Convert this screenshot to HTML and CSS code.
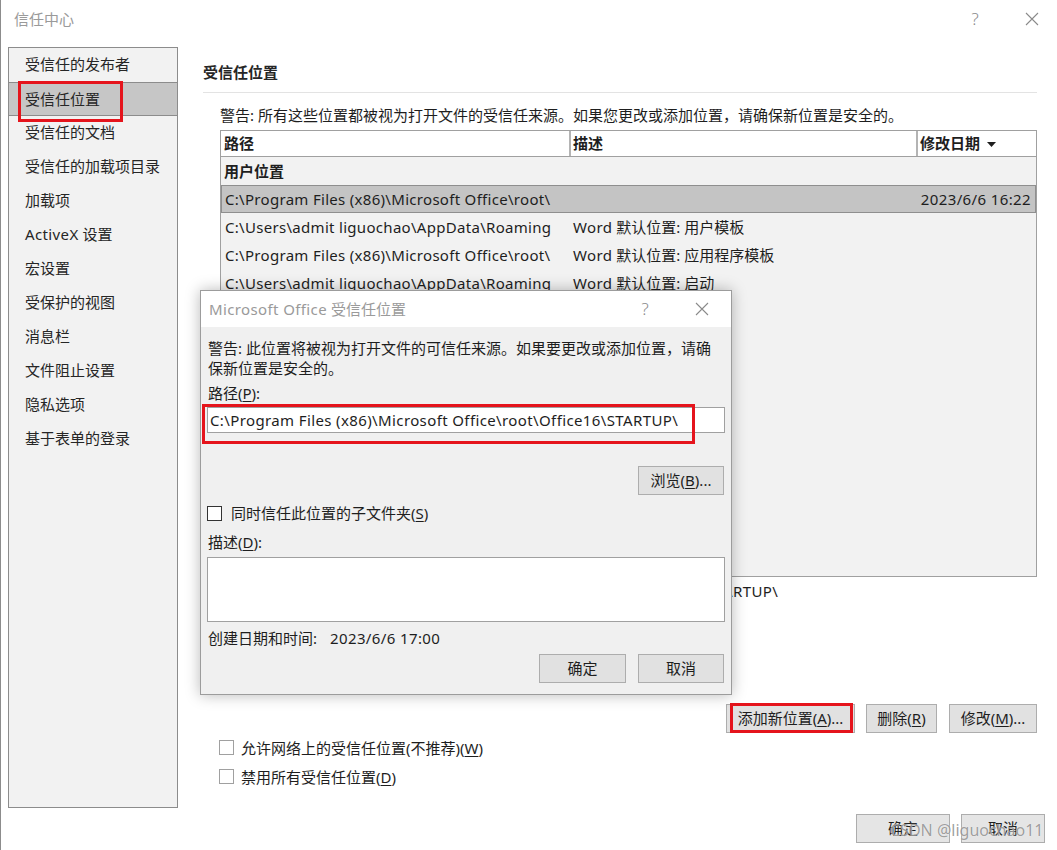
FILE: index.html
```html
<!DOCTYPE html>
<html lang="zh-CN">
<head>
<meta charset="utf-8">
<title>信任中心</title>
<link rel="stylesheet" href="styles.css">
</head>
<body>
<div class="window">
  <header class="titlebar">
    <span class="title">信任中心</span>
    <div class="caption-btns">
      <span class="help">?</span>
      <svg class="close" width="14" height="14" viewBox="0 0 14 14"><path d="M1 1L13 13M13 1L1 13" stroke="#8a8a8a" stroke-width="1.1" fill="none"/></svg>
    </div>
  </header>
  <div class="content">
    <nav class="sidebar">
      <div class="nav-item">受信任的发布者</div>
      <div class="nav-item selected">受信任位置</div>
      <div class="nav-item">受信任的文档</div>
      <div class="nav-item">受信任的加载项目录</div>
      <div class="nav-item">加载项</div>
      <div class="nav-item"><span class="lt">ActiveX</span> 设置</div>
      <div class="nav-item">宏设置</div>
      <div class="nav-item">受保护的视图</div>
      <div class="nav-item">消息栏</div>
      <div class="nav-item">文件阻止设置</div>
      <div class="nav-item">隐私选项</div>
      <div class="nav-item">基于表单的登录</div>
    </nav>
    <main class="main">
      <h2 class="heading">受信任位置</h2>
      <div class="rule"></div>
      <div class="section">
        <p class="warn">警告: 所有这些位置都被视为打开文件的受信任来源。如果您更改或添加位置，请确保新位置是安全的。</p>
        <div class="table">
          <div class="thead">
            <div class="th c1">路径</div>
            <div class="th c2">描述</div>
            <div class="th c3">修改日期<svg class="sort" width="9" height="5" viewBox="0 0 9 5"><path d="M0 0H9L4.5 5Z" fill="#1e1e1e"/></svg></div>
          </div>
          <div class="group">用户位置</div>
          <div class="row sel"><div class="c1 lt">C:\Program Files (x86)\Microsoft Office\root\</div><div class="c2"></div><div class="c3 lt">2023/6/6 16:22</div></div>
          <div class="row"><div class="c1 lt">C:\Users\admit liguochao\AppData\Roaming</div><div class="c2"><span class="lt">Word</span> 默认位置: 用户模板</div><div class="c3"></div></div>
          <div class="row"><div class="c1 lt">C:\Program Files (x86)\Microsoft Office\root\</div><div class="c2"><span class="lt">Word</span> 默认位置: 应用程序模板</div><div class="c3"></div></div>
          <div class="row"><div class="c1 lt">C:\Users\admit liguochao\AppData\Roaming</div><div class="c2"><span class="lt">Word</span> 默认位置: 启动</div><div class="c3"></div></div>
        </div>
        <div class="details">
          <div class="drow"><span class="dl">路径:</span><span class="dv lt">C:\Program Files (x86)\Microsoft Office\root\Office16\STARTUP\</span></div>
          <div class="drow"><span class="dl">描述:</span><span class="dv"></span></div>
          <div class="drow"><span class="dl">修改日期:</span><span class="dv lt">2023/6/6 16:22</span></div>
          <div class="drow"><span class="dl">子文件夹:</span><span class="dv">不允许</span></div>
        </div>
        <div class="actions">
          <button class="btn btn-add marked">添加新位置(<u>A</u>)...</button>
          <button class="btn btn-del">删除(<u>R</u>)</button>
          <button class="btn btn-mod">修改(<u>M</u>)...</button>
        </div>
        <div class="chk"><span class="box"></span><span>允许网络上的受信任位置(不推荐)(<u>W</u>)</span></div>
        <div class="chk"><span class="box"></span><span>禁用所有受信任位置(<u>D</u>)</span></div>
      </div>
    </main>
  </div>
  <footer class="footer">
    <button class="btn btn-ok">确定</button>
    <button class="btn btn-cancel">取消</button>
  </footer>

  <div class="dialog">
    <div class="dlg-title">
      <span class="dlg-name"><span class="lt">Microsoft Office</span> 受信任位置</span>
      <div class="dlg-caption">
        <span class="help">?</span>
        <svg class="close" width="14" height="14" viewBox="0 0 14 14"><path d="M1 1L13 13M13 1L1 13" stroke="#8a8a8a" stroke-width="1.1" fill="none"/></svg>
      </div>
    </div>
    <div class="dlg-body">
      <p class="dlg-warn">警告: 此位置将被视为打开文件的可信任来源。如果要更改或添加位置，请确<br>保新位置是安全的。</p>
      <div class="dlg-label">路径(<u>P</u>):</div>
      <div class="dlg-input marked-input"><span class="lt">C:\Program Files (x86)\Microsoft Office\root\Office16\STARTUP\</span></div>
      <div class="dlg-browse"><button class="btn btn-browse">浏览(<u>B</u>)...</button></div>
      <div class="dlg-chk"><span class="box dark"></span><span>同时信任此位置的子文件夹(<u>S</u>)</span></div>
      <div class="dlg-label dlg-desc-label">描述(<u>D</u>):</div>
      <div class="dlg-textarea"></div>
      <div class="dlg-created"><span>创建日期和时间:</span><span class="dlg-date lt">2023/6/6 17:00</span></div>
      <div class="dlg-buttons">
        <button class="btn btn-dok">确定</button>
        <button class="btn btn-dcancel">取消</button>
      </div>
    </div>
  </div>

  <div class="watermark">CSDN @liguochao11</div>
</div>
</body>
</html>
```
FILE: styles.css
```css
* { box-sizing: border-box; }
html, body {
  margin: 0;
  padding: 0;
  background: #fff;
}
body {
  font-family: "Noto Sans", "Noto Sans CJK SC", sans-serif;
  font-size: 15px;
  color: #1e1e1e;
  line-height: 20px;
}
u { text-decoration: underline; text-underline-offset: 2px; }
.lt { letter-spacing: 0.38px; }

.window {
  position: relative;
  width: 1057px;
  height: 850px;
  border-left: 1px solid #8c8c8c;
  display: flex;
  flex-direction: column;
  overflow: hidden;
}

/* title bar */
.titlebar {
  height: 47px;
  flex: none;
  display: flex;
  align-items: flex-start;
  padding: 9px 18px 0 13px;
}
.title { color: #9a9a9a; }
.caption-btns {
  margin-left: auto;
  display: flex;
  align-items: center;
  gap: 40px;
}
.help {
  width: 20px;
  text-align: center;
  color: #8a8a8a;
  font-size: 17px;
  font-family: "Noto Sans", sans-serif;
  font-weight: 300;
}
.close { display: block; }

/* content */
.content {
  height: 761px;
  flex: none;
  display: flex;
  padding-left: 7px;
}
.sidebar {
  width: 170px;
  flex: none;
  background: #f2f2f2;
  border: 1px solid #8c8c8c;
}
.nav-item {
  position: relative;
  height: 34px;
  line-height: 32px;
  padding-left: 16px;
  color: #262626;
  white-space: nowrap;
}
.nav-item.selected {
  background: #c6c6c6;
  border-top: 1px solid #8c8c8c;
  border-bottom: 1px solid #8c8c8c;
  line-height: 32px;
}
.nav-item.selected::after {
  content: "";
  position: absolute;
  left: 9px;
  top: -2px;
  width: 99px;
  height: 35px;
  border: 3px solid #e5141c;
}

.main {
  flex: 1;
  display: flex;
  flex-direction: column;
  padding: 0 20px 0 25px;
}
.heading {
  margin: 15px 0 0;
  font-size: 15px;
  font-weight: bold;
  line-height: 20px;
  color: #262626;
}
.rule {
  margin-top: 10px;
  height: 1px;
  background: #e3e3e3;
}
.section {
  flex: 1;
  display: flex;
  flex-direction: column;
  padding: 0 0 17px 17px;
}
.warn {
  margin: 12px 0 5px;
  white-space: nowrap;
}

/* table */
.table {
  height: 447px;
  flex: none;
  border: 1px solid #a0a0a0;
  background: #f2f2f2;
  overflow: hidden;
}
.thead {
  display: grid;
  grid-template-columns: 348px 347px 1fr;
  height: 26px;
  background: #fff;
  border-bottom: 1px solid #a0a0a0;
}
.th {
  font-weight: bold;
  line-height: 25px;
  padding-left: 3px;
  white-space: nowrap;
}
.th.c2, .th.c3 {
  border-left: 2px solid #b4b4b4;
  padding-left: 2px;
}
.sort { margin-left: 7px; vertical-align: 2px; }
.group {
  height: 28px;
  line-height: 28px;
  padding-left: 3px;
  font-weight: bold;
}
.row {
  display: grid;
  grid-template-columns: 348px 347px 1fr;
  height: 28px;
  line-height: 28px;
  white-space: nowrap;
}
.row > div { overflow: hidden; }
.row .c1 { padding-left: 4px; letter-spacing: 0.3px; }
.row .c2 { padding-left: 4px; }
.row .c3 { text-align: right; padding-right: 5px; }
.row.sel {
  background: #c4c4c4;
  border: 1px solid #8f8f8f;
  line-height: 26px;
}
.row.sel .c1 { padding-left: 3px; }
.row.sel .c2 { padding-left: 3px; }
.row.sel .c3 { padding-right: 4px; }

/* details under table */
.details { margin-top: 4px; }
.drow {
  height: 28px;
  line-height: 20px;
  white-space: nowrap;
  display: flex;
}
.dl { width: 90px; flex: none; }

.actions {
  margin-top: auto;
  display: flex;
  justify-content: flex-end;
  gap: 11px;
}
.btn {
  font-family: inherit;
  font-size: 15px;
  color: #1e1e1e;
  background: #e1e1e1;
  border: 1px solid #adadad;
  border-radius: 0;
  height: 29px;
  padding: 0;
  line-height: 27px;
  text-align: center;
  white-space: nowrap;
}
.btn-add { width: 129px; }
.btn-del { width: 71px; }
.btn-mod { width: 88px; margin-left: 1px; }
.marked { position: relative; }
.marked::after {
  content: "";
  position: absolute;
  left: 3px;
  right: 1px;
  top: -2px;
  bottom: -1px;
  border: 3px solid #e5141c;
}

.chk {
  height: 29px;
  display: flex;
  align-items: center;
  gap: 7px;
  margin-left: -1px;
}
.chk:first-of-type { margin-top: 1px; }
.box {
  width: 15px;
  height: 15px;
  flex: none;
  border: 1px solid #a0a0a0;
  background: #fff;
}
.box.dark { border-color: #333; }

/* footer */
.footer {
  flex: 1;
  display: flex;
  justify-content: flex-end;
  align-items: flex-start;
  gap: 11px;
  padding: 6px 12px 0 0;
}
.btn-ok { width: 94px; background: #e5e5e5; }
.btn-cancel { width: 84px; background: #e5e5e5; }

/* dialog */
.dialog {
  position: absolute;
  left: 199px;
  top: 290px;
  width: 532px;
  height: 405px;
  background: #f0f0f0;
  border: 1px solid #9c9c9c;
  box-shadow: 0 0 14px rgba(0, 0, 0, 0.28);
  display: flex;
  flex-direction: column;
}
.dlg-title {
  height: 36px;
  flex: none;
  background: #fff;
  display: flex;
  align-items: center;
  padding: 0 22px 0 8px;
}
.dlg-name { color: #9a9a9a; }
.dlg-caption {
  margin-left: auto;
  display: flex;
  align-items: center;
  gap: 40px;
}
.dlg-body {
  padding: 11px 7px 0 7px;
  display: flex;
  flex-direction: column;
}
.dlg-warn {
  margin: 0;
  white-space: nowrap;
}
.dlg-label { margin-top: 5px; }
.dlg-input {
  position: relative;
  margin: 4px -1px 0 -1px;
  height: 26px;
  background: #fff;
  border: 1px solid #a0a0a0;
  line-height: 24px;
  padding-left: 2px;
  white-space: nowrap;
}
.marked-input::after {
  content: "";
  position: absolute;
  left: -6px;
  top: -4px;
  width: 487px;
  height: 34px;
  border: 3px solid #e5141c;
}
.dlg-browse {
  margin-top: 33px;
  display: flex;
  justify-content: flex-end;
}
.btn-browse { width: 86px; }
.dlg-chk {
  margin-top: 8px;
  height: 20px;
  display: flex;
  align-items: center;
  gap: 9px;
  margin-left: -1px;
}
.dlg-desc-label { margin-top: 9px; }
.dlg-textarea {
  margin: 5px -1px 0 -1px;
  height: 65px;
  background: #fff;
  border: 1px solid #a0a0a0;
}
.dlg-created {
  margin-top: 6px;
  white-space: nowrap;
}
.dlg-date { margin-left: 13px; }
.dlg-buttons {
  margin-top: 6px;
  display: flex;
  justify-content: flex-end;
  gap: 12px;
}
.btn-dok { width: 87px; }
.btn-dcancel { width: 86px; }

.watermark {
  position: absolute;
  left: 889px;
  top: 820px;
  font-size: 16px;
  line-height: 20px;
  color: rgba(100, 100, 100, 0.62);
  text-shadow: 0 0 1px rgba(255, 255, 255, 0.9);
  white-space: nowrap;
  font-family: "Noto Sans", sans-serif;
}
```
